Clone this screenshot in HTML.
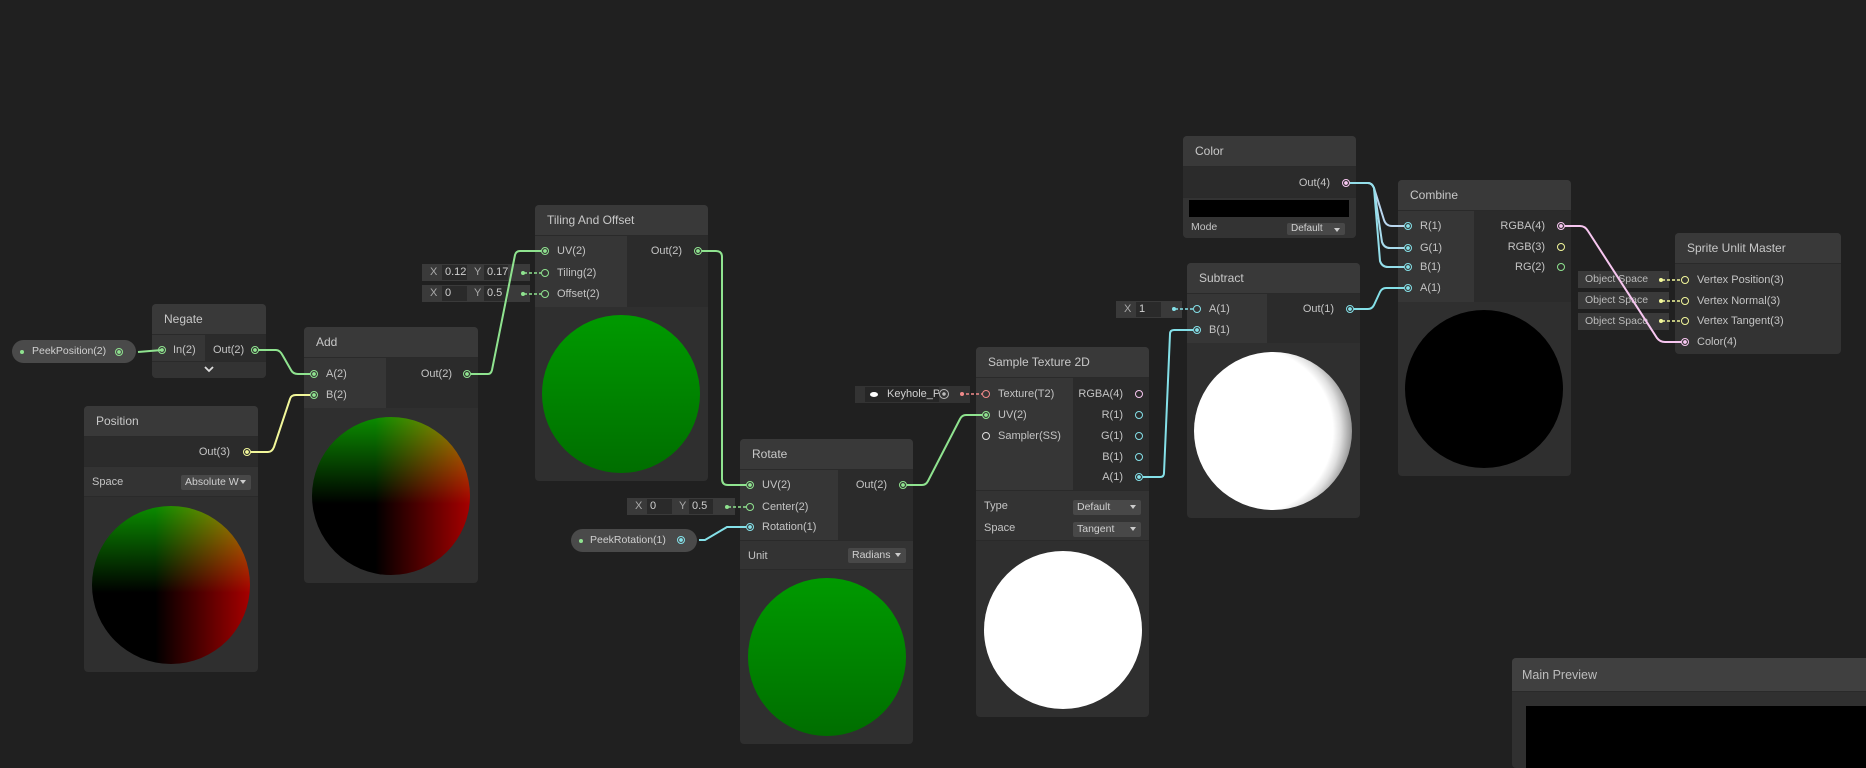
<!DOCTYPE html>
<html><head><meta charset="utf-8"><style>
*{box-sizing:border-box;margin:0;padding:0}
body{width:1866px;height:762px;background:#202020;overflow:hidden;position:relative;font-family:"Liberation Sans",sans-serif;font-size:11px;color:#c4c4c4}
.n{position:absolute;background:#2f2f2f;border-radius:4px;overflow:hidden}
.h{position:absolute;left:0;right:0;top:0;height:31px;background:#393939;border-bottom:1px solid #2a2a2a;padding-left:12px;line-height:31px;font-size:12px;color:#c8c8c8}
.ic{position:absolute;left:0;top:31px;background:#363636}
.oc{position:absolute;right:0;top:31px;background:#2b2b2b}
.sec{position:absolute;left:0;right:0;background:#333;border-top:1px solid #2a2a2a;border-bottom:1px solid #2a2a2a}
.t{position:absolute;white-space:nowrap;line-height:14px;transform:translateY(-7px)}
.r{text-align:right}
.p{position:absolute;width:8px;height:8px;border-radius:50%;border:1.5px solid;transform:translate(-4px,-4px)}
.f{background:radial-gradient(circle,currentColor 0 1.6px,transparent 2.2px)}
.g{color:#8fe38f;border-color:#8fe38f}
.c{color:#84e0e8;border-color:#84e0e8}
.y{color:#f2f79a;border-color:#f2f79a}
.k{color:#f7c6f0;border-color:#f7c6f0}
.rd{color:#f08a8a;border-color:#f08a8a}
.circ{position:absolute;width:158px;height:158px;border-radius:50%}
.dd{position:absolute;background:#484848;border-radius:2px;font-size:10.5px;line-height:14px;padding-left:4px;color:#d0d0d0;height:15px;overflow:hidden;white-space:nowrap}
.dd:after{content:"";position:absolute;right:5px;top:5px;border:3px solid transparent;border-top:4px solid #ccc}
.fld{position:absolute;background:#3a3a3a;height:17px;font-size:11px;line-height:17px;color:#aaa;white-space:nowrap}
.fld b{font-weight:normal;position:absolute;top:1px;height:15px;line-height:15px;background:#2a2a2a;color:#d0d0d0;padding-left:3px;overflow:hidden}
.pill{position:absolute;height:23px;border-radius:12px;background:#4a4a4a;line-height:23px;font-size:10.5px;color:#d0d0d0;padding-left:19px;white-space:nowrap}
.pill:before{content:"";position:absolute;left:8px;top:10px;width:4px;height:4px;border-radius:50%;background:#8fe38f}
</style></head><body>

<svg width="1866" height="762" style="position:absolute;left:0;top:0;z-index:5;pointer-events:none" fill="none" stroke-width="2">
<path d="M138,352 L162,350" stroke="#8fe38f"/>
<path d="M258,350 H276 Q280,350 283,356 L291,370 Q293,374 298,374 H310" stroke="#8fe38f"/>
<path d="M251,452 H268 Q272,452 274,447 L290,399 Q291,395 296,395 H310" stroke="#f2f79a"/>
<path d="M471,374 H488 Q491,374 492,370 L515,255 Q516,251 520,251 H541" stroke="#8fe38f"/>
<path d="M702,251 H716 Q722,251 722,257 V479 Q722,485 728,485 H746" stroke="#8fe38f"/>
<path d="M907,485 H922 Q926,485 928,481 L960,419 Q962,415 966,415 H982" stroke="#8fe38f"/>
<path d="M699,540 H705 L727,527 H746" stroke="#84e0e8"/>
<path d="M1143,477 H1160 Q1164,477 1164,473 L1170,334 Q1170,330 1174,330 H1193" stroke="#84e0e8"/>
<path d="M1354,309 H1368 Q1372,309 1374,305 L1380,292 Q1382,288 1386,288 H1404" stroke="#84e0e8"/>
<path d="M1350,183 H1368 Q1372,183 1374,188 L1384,220 Q1386,226 1392,226 H1404" stroke="#b9d6ee"/>
<path d="M1350,183 H1368 Q1372,183 1374,188 L1382,242 Q1384,248 1390,248 H1404" stroke="#a8dbec"/>
<path d="M1350,183 H1368 Q1372,183 1374,188 L1380,261 Q1382,267 1388,267 H1404" stroke="#94deea"/>
<path d="M1565,226 H1580 Q1585,226 1588,231 L1657,338 Q1660,342 1665,342 H1681" stroke="#f7c6f0"/>
<g stroke-dasharray="3,2" stroke-width="1.5">
<path d="M524,273 H541 M524,294 H541" stroke="#8fe38f"/>
<path d="M728,507 H746" stroke="#8fe38f"/>
<path d="M1175,309 H1193" stroke="#84e0e8"/>
<path d="M961,394 H982" stroke="#f08a8a"/>
<path d="M1662,280 H1681 M1662,301 H1681 M1662,321 H1681" stroke="#f2f79a"/>
</g>
<g fill="#8fe38f" stroke="none"><circle cx="523" cy="273" r="2"/><circle cx="523" cy="294" r="2"/><circle cx="727" cy="507" r="2"/></g>
<circle cx="1174" cy="309" r="2" fill="#84e0e8"/><circle cx="962" cy="394" r="2" fill="#f08a8a"/>
<g fill="#f2f79a"><circle cx="1661" cy="280" r="2"/><circle cx="1661" cy="301" r="2"/><circle cx="1661" cy="321" r="2"/></g>
</svg>

<div class="pill" style="left:12px;top:340px;width:124px;padding-left:20px">PeekPosition(2)<span class="p g f" style="left:107px;top:12px"></span></div>

<div class="n" style="left:152px;top:304px;width:114px;height:74px">
<div class="h">Negate</div>
<div class="ic" style="width:53px;height:26px"></div><div class="oc" style="width:61px;height:26px"></div>
<div class="sec" style="top:57px;height:17px;border-bottom:0"></div>
<span class="p g f" style="left:10px;top:46px"></span><span class="t" style="left:21px;top:46px">In(2)</span>
<span class="t" style="left:61px;top:46px">Out(2)</span><span class="p g f" style="left:103px;top:46px"></span>
<svg style="position:absolute;left:52px;top:61px" width="10" height="8"><path d="M1,2 L5,6 L9,2" stroke="#ddd" stroke-width="1.8" fill="none"/></svg>
</div>

<div class="n" style="left:84px;top:406px;width:174px;height:266px">
<div class="h">Position</div>
<div class="oc" style="left:0;height:29px"></div>
<span class="t r" style="right:28px;top:46px">Out(3)</span><span class="p y f" style="left:163px;top:46px"></span>
<div class="sec" style="top:60px;height:31px"></div>
<span class="t" style="left:8px;top:76px">Space</span>
<div class="dd" style="left:97px;top:69px;width:70px;padding-right:12px">Absolute W</div>
<div class="circ" style="left:8px;top:100px;background:linear-gradient(to bottom,#0b8c00 0%,#000 55%),linear-gradient(to right,#000 40%,#a60000 100%);background-blend-mode:screen"></div>
</div>

<div class="n" style="left:304px;top:327px;width:174px;height:256px">
<div class="h">Add</div>
<div class="ic" style="width:82px;height:50px"></div><div class="oc" style="width:92px;height:50px"></div>
<span class="p g f" style="left:10px;top:47px"></span><span class="t" style="left:22px;top:47px">A(2)</span>
<span class="p g f" style="left:10px;top:68px"></span><span class="t" style="left:22px;top:68px">B(2)</span>
<span class="t r" style="right:26px;top:47px">Out(2)</span><span class="p g f" style="left:163px;top:47px"></span>
<div class="circ" style="left:8px;top:90px;background:linear-gradient(to bottom,#0b8c00 0%,#000 55%),linear-gradient(to right,#000 40%,#a60000 100%);background-blend-mode:screen"></div>
</div>

<div class="fld" style="left:422px;top:264px;width:108px"><span style="position:absolute;left:8px">X</span><b style="left:20px;width:25px">0.12</b><span style="position:absolute;left:52px">Y</span><b style="left:62px;width:24px">0.17</b></div>
<div class="fld" style="left:422px;top:285px;width:108px"><span style="position:absolute;left:8px">X</span><b style="left:20px;width:25px">0</b><span style="position:absolute;left:52px">Y</span><b style="left:62px;width:24px">0.5</b></div>

<div class="n" style="left:535px;top:205px;width:173px;height:276px">
<div class="h">Tiling And Offset</div>
<div class="ic" style="width:92px;height:71px"></div><div class="oc" style="width:81px;height:71px"></div>
<span class="p g f" style="left:10px;top:46px"></span><span class="t" style="left:22px;top:46px">UV(2)</span>
<span class="p g" style="left:10px;top:68px"></span><span class="t" style="left:22px;top:68px">Tiling(2)</span>
<span class="p g" style="left:10px;top:89px"></span><span class="t" style="left:22px;top:89px">Offset(2)</span>
<span class="t r" style="right:26px;top:46px">Out(2)</span><span class="p g f" style="left:163px;top:46px"></span>
<div class="circ" style="left:7px;top:110px;background:linear-gradient(#009a00,#006e00)"></div>
</div>

<div class="fld" style="left:627px;top:498px;width:108px"><span style="position:absolute;left:8px">X</span><b style="left:20px;width:25px">0</b><span style="position:absolute;left:52px">Y</span><b style="left:62px;width:24px">0.5</b></div>
<div class="pill" style="left:571px;top:529px;width:126px">PeekRotation(1)<span class="p c f" style="left:110px;top:11px"></span></div>

<div class="n" style="left:740px;top:439px;width:173px;height:305px">
<div class="h">Rotate</div>
<div class="ic" style="width:98px;height:70px"></div><div class="oc" style="width:75px;height:70px"></div>
<span class="p g f" style="left:10px;top:46px"></span><span class="t" style="left:22px;top:46px">UV(2)</span>
<span class="p g" style="left:10px;top:68px"></span><span class="t" style="left:22px;top:68px">Center(2)</span>
<span class="p c f" style="left:10px;top:88px"></span><span class="t" style="left:22px;top:88px">Rotation(1)</span>
<span class="t r" style="right:26px;top:46px">Out(2)</span><span class="p g f" style="left:163px;top:46px"></span>
<div class="sec" style="top:101px;height:30px"></div>
<span class="t" style="left:8px;top:117px">Unit</span>
<div class="dd" style="left:108px;top:109px;width:58px">Radians</div>
<div class="circ" style="left:8px;top:139px;background:linear-gradient(#009a00,#006e00)"></div>
</div>

<div class="fld" style="left:855px;top:386px;width:115px;background:#333"><b style="left:10px;width:74px;background:#262626;padding-left:22px">Keyhole_Pe</b>
<span style="position:absolute;left:15px;top:6px;width:8px;height:5px;border-radius:50%;background:#fff"></span>
<span style="position:absolute;left:84px;top:3px;width:10px;height:10px;border-radius:50%;border:1px solid #bbb;background:radial-gradient(circle,#bbb 0 1.5px,transparent 2px)"></span>
</div>

<div class="n" style="left:976px;top:347px;width:173px;height:370px">
<div class="h">Sample Texture 2D</div>
<div class="ic" style="width:97px;height:112px"></div><div class="oc" style="width:76px;height:112px"></div>
<span class="p rd" style="left:10px;top:47px"></span><span class="t" style="left:22px;top:47px">Texture(T2)</span>
<span class="p g f" style="left:10px;top:68px"></span><span class="t" style="left:22px;top:68px">UV(2)</span>
<span class="p" style="left:10px;top:89px;border-color:#ddd"></span><span class="t" style="left:22px;top:89px">Sampler(SS)</span>
<span class="t r" style="right:26px;top:47px">RGBA(4)</span><span class="p k" style="left:163px;top:47px"></span>
<span class="t r" style="right:26px;top:68px">R(1)</span><span class="p c" style="left:163px;top:68px"></span>
<span class="t r" style="right:26px;top:89px">G(1)</span><span class="p c" style="left:163px;top:89px"></span>
<span class="t r" style="right:26px;top:110px">B(1)</span><span class="p c" style="left:163px;top:110px"></span>
<span class="t r" style="right:26px;top:130px">A(1)</span><span class="p c f" style="left:163px;top:130px"></span>
<div class="sec" style="top:143px;height:51px"></div>
<span class="t" style="left:8px;top:159px">Type</span><div class="dd" style="left:97px;top:153px;width:68px">Default</div>
<span class="t" style="left:8px;top:181px">Space</span><div class="dd" style="left:97px;top:175px;width:68px">Tangent</div>
<div class="circ" style="left:8px;top:204px;background:#fff"></div>
</div>

<div class="n" style="left:1183px;top:136px;width:173px;height:102px">
<div class="h">Color</div>
<div class="oc" style="left:0;height:30px"></div>
<span class="t r" style="right:26px;top:47px">Out(4)</span><span class="p k f" style="left:163px;top:47px"></span>
<div class="sec" style="top:61px;height:41px;border-bottom:0"></div>
<div style="position:absolute;left:6px;top:64px;width:160px;height:17px;background:#000"></div>
<span class="t" style="left:8px;top:91px;font-size:10.5px">Mode</span>
<div class="dd" style="left:104px;top:87px;width:58px;height:12px;line-height:12px;font-size:10px">Default</div>
</div>

<div class="fld" style="left:1116px;top:301px;width:66px"><span style="position:absolute;left:8px">X</span><b style="left:20px;width:25px">1</b></div>

<div class="n" style="left:1187px;top:263px;width:173px;height:255px">
<div class="h">Subtract</div>
<div class="ic" style="width:80px;height:49px"></div><div class="oc" style="width:93px;height:49px"></div>
<span class="p c" style="left:10px;top:46px"></span><span class="t" style="left:22px;top:46px">A(1)</span>
<span class="p c f" style="left:10px;top:67px"></span><span class="t" style="left:22px;top:67px">B(1)</span>
<span class="t r" style="right:26px;top:46px">Out(1)</span><span class="p c f" style="left:163px;top:46px"></span>
<div class="circ" style="left:7px;top:89px;background:radial-gradient(circle at 36% 50%,#fff 0 64%,#e0e0e0 70%,#8a8a8a 80%)"></div>
</div>

<div class="n" style="left:1398px;top:180px;width:173px;height:296px">
<div class="h">Combine</div>
<div class="ic" style="width:76px;height:91px"></div><div class="oc" style="width:97px;height:91px"></div>
<span class="p c f" style="left:10px;top:46px"></span><span class="t" style="left:22px;top:46px">R(1)</span>
<span class="p c f" style="left:10px;top:68px"></span><span class="t" style="left:22px;top:68px">G(1)</span>
<span class="p c f" style="left:10px;top:87px"></span><span class="t" style="left:22px;top:87px">B(1)</span>
<span class="p c f" style="left:10px;top:108px"></span><span class="t" style="left:22px;top:108px">A(1)</span>
<span class="t r" style="right:26px;top:46px">RGBA(4)</span><span class="p k f" style="left:163px;top:46px"></span>
<span class="t r" style="right:26px;top:67px">RGB(3)</span><span class="p y" style="left:163px;top:67px"></span>
<span class="t r" style="right:26px;top:87px">RG(2)</span><span class="p g" style="left:163px;top:87px"></span>
<div class="circ" style="left:7px;top:130px;background:#000"></div>
</div>

<div class="fld" style="left:1578px;top:271px;width:91px;padding-left:7px;color:#bbb;font-size:10.5px">Object Space</div>
<div class="fld" style="left:1578px;top:292px;width:91px;padding-left:7px;color:#bbb;font-size:10.5px">Object Space</div>
<div class="fld" style="left:1578px;top:313px;width:91px;padding-left:7px;color:#bbb;font-size:10.5px">Object Space</div>

<div class="n" style="left:1675px;top:233px;width:166px;height:121px;background:#333">
<div class="h">Sprite Unlit Master</div>
<span class="p y" style="left:10px;top:47px"></span><span class="t" style="left:22px;top:47px">Vertex Position(3)</span>
<span class="p y" style="left:10px;top:68px"></span><span class="t" style="left:22px;top:68px">Vertex Normal(3)</span>
<span class="p y" style="left:10px;top:88px"></span><span class="t" style="left:22px;top:88px">Vertex Tangent(3)</span>
<span class="p k f" style="left:10px;top:109px"></span><span class="t" style="left:22px;top:109px">Color(4)</span>
</div>

<div class="n" style="left:1512px;top:658px;width:360px;height:110px;background:#303030">
<div class="h" style="height:34px;line-height:34px;background:#404040;padding-left:10px;font-size:12.5px;color:#bdbdbd">Main Preview</div>
<div style="position:absolute;left:14px;top:48px;right:0;bottom:0;background:#000"></div>
</div>

</body></html>
